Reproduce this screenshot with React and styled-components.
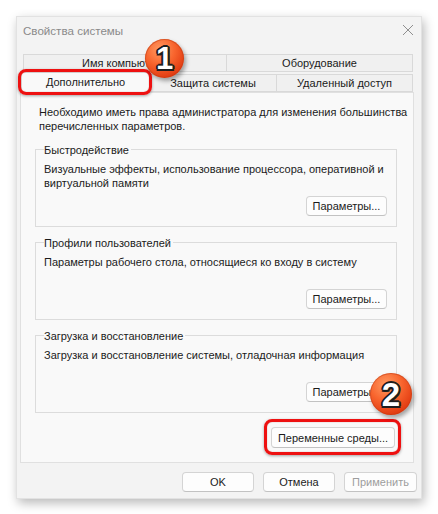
import React from "react";
import styled, { createGlobalStyle } from "styled-components";

const Global = createGlobalStyle`
  html, body { margin: 0; padding: 0; background: #ffffff; }
  body { font-family: "Liberation Sans", Arial, sans-serif; font-size: 11px; color: #1b1b1b; }
`;

const Page = styled.div`
  position: relative;
  width: 438px;
  height: 514px;
  padding: 16px 0 0 16px;
  box-sizing: border-box;
`;

const Window = styled.div`
  width: 406px;
  height: 483px;
  background: #f3f3f3;
  border: 1px solid #e2e2e2;
  box-sizing: border-box;
  box-shadow: 2px 4px 10px rgba(0, 0, 0, 0.28);
  display: flex;
  flex-direction: column;
`;

const TitleBar = styled.div`
  height: 37px;
  display: flex;
  align-items: flex-start;
  justify-content: space-between;
  padding: 6px 7px 0 6px;
  box-sizing: border-box;
`;

const Title = styled.span`
  font-size: 11.6px;
  line-height: 16px;
  color: #8a8a8a;
`;

const Close = styled.span`
  display: flex;
  width: 12px;
  height: 12px;
  margin-top: 1px;
`;

const TabStrip = styled.div`
  display: flex;
  flex-direction: column;
`;

const TabRow = styled.div`
  display: flex;
  margin-left: ${(p) => p.$indent}px;
  width: ${(p) => p.$width}px;
  align-items: flex-end;
`;

const Tab = styled.div`
  width: ${(p) => p.$w}px;
  height: ${(p) => (p.$active ? 21 : 18)}px;
  box-sizing: border-box;
  border: 1px solid #d9d9d9;
  border-bottom: ${(p) => (p.$active ? "none" : "1px solid #d9d9d9")};
  border-left: ${(p) => (p.$noLeft ? "none" : "1px solid #d9d9d9")};
  background: ${(p) => (p.$active ? "#f9f9f9" : "#f0f0f0")};
  display: flex;
  align-items: center;
  justify-content: center;
  font-size: 11px;
  color: #1b1b1b;
  position: relative;
  z-index: ${(p) => (p.$active ? 2 : 1)};
  margin-bottom: ${(p) => (p.$active ? -1 : 0)}px;
  padding-bottom: ${(p) => (p.$active ? 2 : 0)}px;
`;

const Highlight = styled.div`
  position: relative;
  display: flex;
  &::after {
    content: "";
    position: absolute;
    top: ${(p) => p.$t}px;
    left: ${(p) => p.$l}px;
    right: ${(p) => p.$r}px;
    bottom: ${(p) => p.$b}px;
    border: 3px solid #ee1111;
    border-radius: 8px;
    box-shadow: 0 1px 3px rgba(0, 0, 0, 0.35), inset 0 0 1px rgba(120, 0, 0, 0.6);
    pointer-events: none;
    z-index: 5;
  }
`;

const Panel = styled.div`
  margin: 0 7px 0 3px;
  height: 371px;
  box-sizing: border-box;
  background: #f9f9f9;
  border: 1px solid #e0e0e0;
  padding: 12px 16px 0 14px;
  display: flex;
  flex-direction: column;
`;

const Intro = styled.p`
  margin: 0 -12px 0 4px;
  line-height: 14px;
  font-size: 11px;
`;

const GroupBox = styled.div`
  border: 1px solid #dcdcdc;
  margin-top: ${(p) => p.$mt}px;
  padding: 0 9px 10px 8px;
  display: flex;
  flex-direction: column;
`;

const Legend = styled.span`
  align-self: flex-start;
  margin-top: -8px;
  height: 16px;
  line-height: 16px;
  padding: 0 2px 0 0;
  background: #f9f9f9;
  font-size: 11px;
`;

const Desc = styled.div`
  margin-top: 4px;
  min-height: 28px;
  line-height: 14px;
  font-size: 11px;
`;

const Button = styled.button`
  font-family: inherit;
  font-size: 11px;
  height: ${(p) => p.$h || 20}px;
  width: ${(p) => p.$w}px;
  padding: 0;
  box-sizing: border-box;
  background: #fdfdfd;
  border: 1px solid #d4d4d4;
  border-bottom-color: #c2c2c2;
  border-radius: 4px;
  color: ${(p) => (p.disabled ? "#9d9d9d" : "#1b1b1b")};
  display: flex;
  align-items: center;
  justify-content: center;
`;

const ButtonRow = styled.div`
  display: flex;
  justify-content: flex-end;
  margin-top: ${(p) => p.$mt || 6}px;
  margin-right: ${(p) => p.$mr || 0}px;
`;

const Footer = styled.div`
  display: flex;
  justify-content: flex-end;
  gap: 9px;
  margin-top: 9px;
  margin-right: 4px;
`;

const Badge = styled.div`
  position: absolute;
  left: ${(p) => p.$x}px;
  top: ${(p) => p.$y}px;
  width: ${(p) => p.$d}px;
  height: ${(p) => p.$d}px;
  border-radius: 50%;
  background: radial-gradient(circle at 38% 28%, #ff9a62 0%, #f8652e 40%, #e23c12 75%, #c42a08 100%);
  box-shadow: 2px 3px 4px rgba(0, 0, 0, 0.35), inset 0 0 0 1px rgba(190, 60, 20, 0.5);
  display: flex;
  align-items: center;
  justify-content: center;
  z-index: 10;
  font-family: "Liberation Sans", Arial, sans-serif;
  font-weight: bold;
  font-size: ${(p) => p.$fs}px;
  line-height: 1;
  color: #ffffff;
  text-shadow: -1.5px -1.5px 0 #1e1e1e, 1.5px -1.5px 0 #1e1e1e, -1.5px 1.5px 0 #1e1e1e,
    1.5px 1.5px 0 #1e1e1e, 0 -2px 0 #1e1e1e, 0 2px 0 #1e1e1e, -2px 0 0 #1e1e1e, 2px 0 0 #1e1e1e;
`;

const groups = [
  {
    title: "Быстродействие",
    desc: "Визуальные эффекты, использование процессора, оперативной и виртуальной памяти",
  },
  {
    title: "Профили пользователей",
    desc: "Параметры рабочего стола, относящиеся ко входу в систему",
  },
  {
    title: "Загрузка и восстановление",
    desc: "Загрузка и восстановление системы, отладочная информация",
  },
];

export default function App() {
  return (
    <Page>
      <Global />
      <Window>
        <TitleBar>
          <Title>Свойства системы</Title>
          <Close>
            <svg width="12" height="12" viewBox="0 0 12 12">
              <path d="M1 1 L11 11 M11 1 L1 11" stroke="#8f8f8f" strokeWidth="1" fill="none" />
            </svg>
          </Close>
        </TitleBar>
        <TabStrip>
          <TabRow $indent={6} $width={390}>
            <Tab $w={204}>Имя компьютера</Tab>
            <Tab $w={186} $noLeft>Оборудование</Tab>
          </TabRow>
          <TabRow $indent={4} $width={392}>
            <Highlight $t={-3} $l={-3} $r={-2} $b={-3}>
              <Tab $w={129} $active>Дополнительно</Tab>
            </Highlight>
            <Tab $w={127} $noLeft>Защита системы</Tab>
            <Tab $w={136} $noLeft>Удаленный доступ</Tab>
          </TabRow>
        </TabStrip>
        <Panel>
          <Intro>
            Необходимо иметь права администратора для изменения большинства перечисленных параметров.
          </Intro>
          {groups.map((g, i) => (
            <GroupBox key={g.title} $mt={i === 0 ? 16 : 15}>
              <Legend>{g.title}</Legend>
              <Desc>{g.desc}</Desc>
              <ButtonRow>
                <Button $w={81}>Параметры...</Button>
              </ButtonRow>
            </GroupBox>
          ))}
          <ButtonRow $mt={14} $mr={2}>
            <Highlight $t={-8} $l={-7} $r={-6} $b={-7}>
              <Button $w={124} $h={21}>Переменные среды...</Button>
            </Highlight>
          </ButtonRow>
        </Panel>
        <Footer>
          <Button $w={72}>OK</Button>
          <Button $w={72}>Отмена</Button>
          <Button $w={73} disabled>Применить</Button>
        </Footer>
      </Window>
      <Badge $x={145} $y={39} $d={39} $fs={31}>1</Badge>
      <Badge $x={370} $y={373} $d={42} $fs={33}>2</Badge>
    </Page>
  );
}
